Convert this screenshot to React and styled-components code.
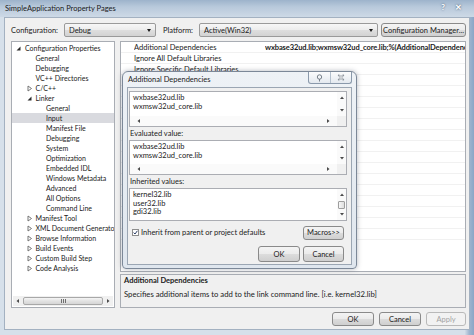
import styled, { createGlobalStyle } from "styled-components";

const GlobalStyle = createGlobalStyle`
  html, body { margin: 0; padding: 0; }
  body {
    width: 474px;
    height: 335px;
    overflow: hidden;
    font-family: Lato, "Liberation Sans", sans-serif;
    font-size: 7.5px;
    color: #1b1b1b;
    background: #c8d6e5;
  }
  * { box-sizing: border-box; }
`;

const Window = styled.div`
  position: relative;
  width: 474px;
  height: 335px;
  display: flex;
  flex-direction: column;
  padding: 0 4px 5px 4px;
  background: linear-gradient(90deg, #d6e0ea 0%, #d6e0ea 98%, #9fb5cf 99%, #8ba6c6 100%);
`;

const TitleBar = styled.div`
  height: 17px;
  margin: 0 -4px;
  padding-left: 5px;
  display: flex;
  align-items: center;
  color: #1a1a1a;
  font-size: 7.5px;
  background: linear-gradient(180deg, #9db3cb 0%, #b8c9db 40%, #cdd9e6 100%);
`;

const CaptionButtons = styled.div`
  margin-left: auto;
  display: flex;
  gap: 10px;
  padding-right: 12px;
  align-self: flex-start;
  padding-top: 2px;
  color: #ffffff;
  font-size: 8px;
  font-weight: 700;
  text-shadow: 0 0 2px #33485f;
`;

const Client = styled.div`
  flex: 1;
  display: flex;
  flex-direction: column;
  gap: 4px;
  background: #f0f0f0;
  border: 1px solid #a3b1c1;
  padding: 5px 3px 3px 6px;
`;

const ConfigRow = styled.div`
  height: 14px;
  display: flex;
  align-items: center;
`;

const Label = styled.span`
  white-space: nowrap;
  margin-right: ${(p) => p.$gap || 0}px;
`;

const Combo = styled.div`
  width: ${(p) => p.$w}px;
  height: 14px;
  margin-right: ${(p) => p.$mr || 0}px;
  display: flex;
  align-items: center;
  padding: 0 4px;
  border: 1px solid #9a9a9a;
  border-radius: 2px;
  background: linear-gradient(180deg, #f7f7f7 0%, #ececec 50%, #dedede 51%, #d3d3d3 100%);
`;

const ComboArrow = styled.span`
  margin-left: auto;
  width: 0;
  height: 0;
  border-left: 2.5px solid transparent;
  border-right: 2.5px solid transparent;
  border-top: 3px solid #1a1a1a;
`;

const Button = styled.div`
  width: ${(p) => p.$w}px;
  height: ${(p) => p.$h || 14}px;
  margin-left: ${(p) => (p.$push ? "auto" : "0")};
  display: flex;
  align-items: center;
  justify-content: center;
  border: 1px solid ${(p) => (p.$disabled ? "#b9b9b9" : "#8a8a8a")};
  border-radius: 3px;
  color: ${(p) => (p.$disabled ? "#a3a3a3" : "#1b1b1b")};
  background: ${(p) =>
    p.$disabled
      ? "#f2f2f2"
      : "linear-gradient(180deg, #f4f4f4 0%, #ebebeb 50%, #dcdcdc 51%, #cfcfcf 100%)"};
  white-space: nowrap;
`;

const Main = styled.div`
  flex: 1;
  display: flex;
  gap: 5px;
  min-height: 0;
`;

const Tree = styled.div`
  width: 104px;
  display: flex;
  flex-direction: column;
  background: #ffffff;
  border: 1px solid #a9adb4;
  padding-top: 1px;
  font-size: 7px;
`;

const TreeRow = styled.div`
  height: 10px;
  display: flex;
  align-items: center;
  padding-left: ${(p) => 2 + p.$level * 10.5}px;
  background: ${(p) => (p.$selected ? "#d9dadf" : "transparent")};
  white-space: nowrap;
  overflow: hidden;
`;

const ExpanderBox = styled.span`
  width: 9px;
  height: 9px;
  flex: none;
  display: flex;
  align-items: center;
  justify-content: center;
  margin-right: 2px;
`;

const HScroll = styled.div`
  margin: auto 1px 1px 1px;
  height: 10px;
  display: flex;
  align-items: center;
  gap: 2px;
  padding: 0 2px;
  background: #f0f0f0;
`;

const Thumb = styled.div`
  flex: 1;
  height: 8px;
  border: 1px solid #a8a8a8;
  border-radius: 2px;
  background: linear-gradient(180deg, #f5f5f5 0%, #e2e2e2 50%, #d6d6d6 100%);
  display: flex;
  align-items: center;
  justify-content: center;
  gap: 1px;
`;

const Grip = styled.span`
  width: 1px;
  height: 4px;
  background: #6f6f6f;
`;

const RightColumn = styled.div`
  flex: 1;
  display: flex;
  flex-direction: column;
  gap: 2px;
  min-width: 0;
`;

const Grid = styled.div`
  flex: 1;
  background: #ffffff;
  border: 1px solid #a9adb4;
  overflow: hidden;
`;

const GridRow = styled.div`
  height: 11px;
  display: flex;
  align-items: center;
  padding-left: 13px;
  border-bottom: 1px solid #f1f1f1;
  white-space: nowrap;
`;

const GridName = styled.span`
  width: 131px;
  flex: none;
  overflow: hidden;
`;

const GridValue = styled.span`
  font-weight: 700;
  letter-spacing: -0.1px;
  overflow: hidden;
`;

const Description = styled.div`
  height: 34px;
  border: 1px solid #a9adb4;
  background: #f0f0f0;
  padding: 1px 3px;
  display: flex;
  flex-direction: column;
  gap: 3px;
  line-height: 10px;
  font-size: 7.7px;
`;

const DescTitle = styled.div`
  font-weight: 700;
  font-size: 7.5px;
`;

const BottomRow = styled.div`
  height: 14px;
  display: flex;
  justify-content: flex-end;
  gap: 5px;
`;

const Dialog = styled.div`
  position: absolute;
  left: 122px;
  top: 71px;
  width: 235px;
  height: 198px;
  display: flex;
  flex-direction: column;
  padding: 0 4px 3px 4px;
  border: 1px solid #7c8898;
  border-radius: 6px 6px 4px 4px;
  background: linear-gradient(180deg, #eef2f6 0%, #dfe6ee 100%);
  box-shadow: 0 0 5px rgba(40, 50, 70, 0.35);
`;

const DialogTitle = styled.div`
  height: 15px;
  display: flex;
  align-items: center;
  padding-left: 1px;
`;

const DialogButtons = styled.div`
  margin-left: auto;
  align-self: flex-start;
  display: flex;
  height: 12px;
  border: 1px solid #8a99ab;
  border-top: none;
  border-radius: 0 0 3px 3px;
  background: linear-gradient(180deg, #fbfcfd 0%, #e4e9ef 100%);
`;

const DialogButtonCell = styled.div`
  width: ${(p) => p.$w}px;
  display: flex;
  align-items: center;
  justify-content: center;
  border-left: ${(p) => (p.$first ? "none" : "1px solid #b3bfcc")};
`;

const DialogClient = styled.div`
  flex: 1;
  display: flex;
  flex-direction: column;
  background: #f0f0f0;
  border: 1px solid #9ba6b3;
  padding: 3px 4px 0 1px;
`;

const EditBox = styled.div`
  height: ${(p) => p.$h}px;
  flex: none;
  display: grid;
  grid-template-columns: 1fr 9px;
  grid-template-rows: ${(p) => (p.$hscroll ? "1fr 10px" : "1fr")};
  background: #ffffff;
  border: 1px solid #abadb3;
`;

const EditText = styled.div`
  padding: 2px 3px 0 3px;
  line-height: 8.5px;
  white-space: nowrap;
  overflow: hidden;
`;

const VScroll = styled.div`
  display: flex;
  flex-direction: column;
  align-items: center;
  justify-content: space-between;
  padding: 3px 0;
  background: #fafafa;
`;

const SmallThumb = styled.div`
  width: 7px;
  height: 8px;
  border: 1px solid #9e9e9e;
  border-radius: 1px;
  background: linear-gradient(90deg, #f7f7f7, #dedede);
`;

const HBar = styled.div`
  display: flex;
  align-items: center;
  justify-content: space-between;
  padding: 0 6px;
  background: #fafafa;
`;

const Corner = styled.div`
  background: #f0f0f0;
`;

const FieldLabel = styled.div`
  height: 13px;
  flex: none;
  display: flex;
  align-items: center;
  padding-left: 1px;
`;

const CheckRow = styled.div`
  height: 17px;
  margin-top: 3px;
  display: flex;
  align-items: center;
  padding-left: 3px;
  padding-right: 3px;
`;

const CheckBox = styled.span`
  width: 7px;
  height: 7px;
  margin-right: 2px;
  border: 1px solid #8d8d8d;
  background: #ffffff;
  display: flex;
  align-items: center;
  justify-content: center;
`;

const DialogActions = styled.div`
  margin-top: 5px;
  display: flex;
  justify-content: flex-end;
  gap: 3px;
  padding-right: 3px;
`;

function Arrow({ dir }) {
  const pts = {
    up: "1,4 3,1.5 5,4",
    down: "1,2 3,4.5 5,2",
    left: "4,1 1.5,3 4,5",
    right: "2,1 4.5,3 2,5",
  };
  return (
    <svg width="6" height="6" viewBox="0 0 6 6">
      <polygon points={pts[dir]} fill="#4a4a4a" />
    </svg>
  );
}

function Expander({ state }) {
  if (!state) return <ExpanderBox />;
  return (
    <ExpanderBox>
      <svg width="7" height="7" viewBox="0 0 7 7">
        {state === "open" ? (
          <polygon points="5.5,1.5 5.5,5.5 1.5,5.5" fill="#2a2a2a" />
        ) : (
          <polygon points="2,1 5.5,3.5 2,6" fill="#ffffff" stroke="#6a6a6a" strokeWidth="0.9" />
        )}
      </svg>
    </ExpanderBox>
  );
}

const treeItems = [
  { label: "Configuration Properties", level: 0, exp: "open" },
  { label: "General", level: 1 },
  { label: "Debugging", level: 1 },
  { label: "VC++ Directories", level: 1 },
  { label: "C/C++", level: 1, exp: "closed" },
  { label: "Linker", level: 1, exp: "open" },
  { label: "General", level: 2 },
  { label: "Input", level: 2, selected: true },
  { label: "Manifest File", level: 2 },
  { label: "Debugging", level: 2 },
  { label: "System", level: 2 },
  { label: "Optimization", level: 2 },
  { label: "Embedded IDL", level: 2 },
  { label: "Windows Metadata", level: 2 },
  { label: "Advanced", level: 2 },
  { label: "All Options", level: 2 },
  { label: "Command Line", level: 2 },
  { label: "Manifest Tool", level: 1, exp: "closed" },
  { label: "XML Document Generator", level: 1, exp: "closed" },
  { label: "Browse Information", level: 1, exp: "closed" },
  { label: "Build Events", level: 1, exp: "closed" },
  { label: "Custom Build Step", level: 1, exp: "closed" },
  { label: "Code Analysis", level: 1, exp: "closed" },
];

const gridRows = [
  ["Additional Dependencies", "wxbase32ud.lib;wxmsw32ud_core.lib;%(AdditionalDependencies)"],
  ["Ignore All Default Libraries", ""],
  ["Ignore Specific Default Libraries", ""],
  ["Module Definition File", ""],
  ["Add Module to Assembly", ""],
  ["Embed Managed Resource File", ""],
  ["Force Symbol References", ""],
  ["Delay Loaded Dlls", ""],
  ["Assembly Link Resource", ""],
  ["", ""],
  ["", ""],
  ["", ""],
  ["", ""],
  ["", ""],
  ["", ""],
  ["", ""],
  ["", ""],
  ["", ""],
];

function Edit({ lines, h, hscroll, thumb }) {
  return (
    <EditBox $h={h} $hscroll={hscroll}>
      <EditText>
        {lines.map((l) => (
          <div key={l}>{l}</div>
        ))}
      </EditText>
      <VScroll>
        <Arrow dir="up" />
        {thumb && <SmallThumb />}
        <Arrow dir="down" />
      </VScroll>
      {hscroll && (
        <>
          <HBar>
            <Arrow dir="left" />
            <Arrow dir="right" />
          </HBar>
          <Corner />
        </>
      )}
    </EditBox>
  );
}

function AdditionalDependenciesDialog() {
  return (
    <Dialog>
      <DialogTitle>
        Additional Dependencies
        <DialogButtons>
          <DialogButtonCell $w={21} $first>
            <svg width="7" height="8" viewBox="0 0 7 8">
              <circle cx="3.5" cy="3" r="2.2" fill="none" stroke="#5a6470" strokeWidth="0.8" />
              <line x1="3.5" y1="5.2" x2="3.5" y2="7.5" stroke="#5a6470" strokeWidth="0.8" />
            </svg>
          </DialogButtonCell>
          <DialogButtonCell $w={21}>
            <svg width="8" height="7" viewBox="0 0 8 7">
              <path
                d="M1 1 L2.5 1 L4 2.6 L5.5 1 L7 1 L5 3.5 L7 6 L5.5 6 L4 4.4 L2.5 6 L1 6 L3 3.5 Z"
                fill="#ffffff"
                stroke="#5a6470"
                strokeWidth="0.6"
              />
            </svg>
          </DialogButtonCell>
        </DialogButtons>
      </DialogTitle>
      <DialogClient>
        <Edit lines={["wxbase32ud.lib", "wxmsw32ud_core.lib"]} h={36} hscroll />
        <FieldLabel>Evaluated value:</FieldLabel>
        <Edit lines={["wxbase32ud.lib", "wxmsw32ud_core.lib"]} h={35} hscroll />
        <FieldLabel>Inherited values:</FieldLabel>
        <Edit lines={["kernel32.lib", "user32.lib", "gdi32.lib"]} h={33} thumb />
        <CheckRow>
          <CheckBox>
            <svg width="5" height="5" viewBox="0 0 5 5">
              <polyline points="0.6,2.6 2,4 4.4,0.8" fill="none" stroke="#2c3e66" strokeWidth="1" />
            </svg>
          </CheckBox>
          Inherit from parent or project defaults
          <Button $w={41} $push>
            Macros&gt;&gt;
          </Button>
        </CheckRow>
        <DialogActions>
          <Button $w={42} $h={16}>
            OK
          </Button>
          <Button $w={41} $h={16}>
            Cancel
          </Button>
        </DialogActions>
      </DialogClient>
    </Dialog>
  );
}

export default function App() {
  return (
    <>
      <GlobalStyle />
      <Window>
        <TitleBar>
          SimpleApplication Property Pages
          <CaptionButtons>
            <span>?</span>
            <span>✕</span>
          </CaptionButtons>
        </TitleBar>
        <Client>
          <ConfigRow>
            <Label $gap={6}>Configuration:</Label>
            <Combo $w={93} $mr={7}>
              Debug
              <ComboArrow />
            </Combo>
            <Label $gap={6}>Platform:</Label>
            <Combo $w={181} $mr={3}>
              Active(Win32)
              <ComboArrow />
            </Combo>
            <Button $w={86}>Configuration Manager...</Button>
          </ConfigRow>
          <Main>
            <Tree>
              {treeItems.map((item, i) => (
                <TreeRow key={i} $level={item.level} $selected={item.selected}>
                  <Expander state={item.exp} />
                  {item.label}
                </TreeRow>
              ))}
              <HScroll>
                <Arrow dir="left" />
                <Thumb>
                  <Grip />
                  <Grip />
                  <Grip />
                </Thumb>
                <Arrow dir="right" />
              </HScroll>
            </Tree>
            <RightColumn>
              <Grid>
                {gridRows.map(([name, value], i) => (
                  <GridRow key={i}>
                    <GridName>{name}</GridName>
                    <GridValue>{value}</GridValue>
                  </GridRow>
                ))}
              </Grid>
              <Description>
                <DescTitle>Additional Dependencies</DescTitle>
                <div>Specifies additional items to add to the link command line. [i.e. kernel32.lib]</div>
              </Description>
            </RightColumn>
          </Main>
          <BottomRow>
            <Button $w={42}>OK</Button>
            <Button $w={42}>Cancel</Button>
            <Button $w={40} $disabled>
              Apply
            </Button>
          </BottomRow>
        </Client>
        <AdditionalDependenciesDialog />
      </Window>
    </>
  );
}
